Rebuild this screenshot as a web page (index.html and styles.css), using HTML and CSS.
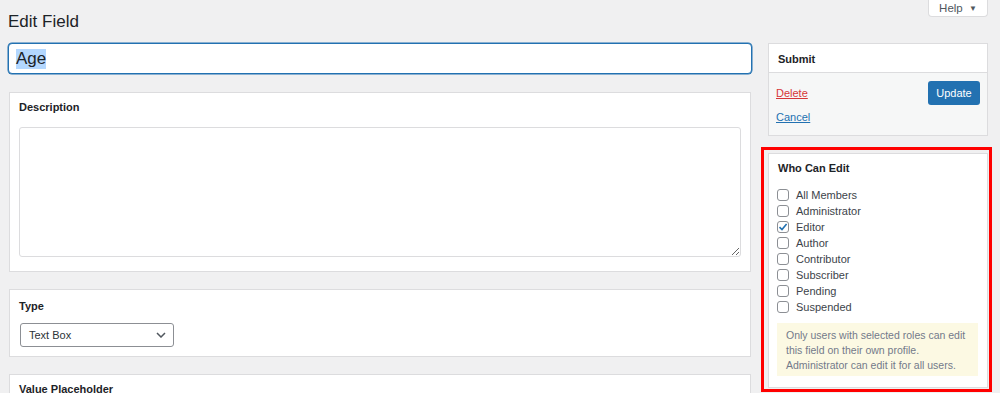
FILE: index.html
```html
<!DOCTYPE html>
<html lang="en">
<head>
    <meta charset="UTF-8">
    <meta name="viewport" content="width=device-width, initial-scale=1.0">
    <title>Edit Field</title>
    <link rel="stylesheet" href="styles.css">
</head>
<body>

    <div class="wrap">
        <div class="page-head">
            <h1 class="page-title">Edit Field</h1>
            <button class="help-tab">Help <span class="caret">&#9660;</span></button>
        </div>

        <div class="columns">
            <!-- main column -->
            <div class="main-col">
                <div class="title-input"><span class="selected">Age</span></div>

                <div class="postbox desc-box">
                    <label class="box-label">Description</label>
                    <textarea class="desc-text"></textarea>
                </div>

                <div class="postbox type-box">
                    <label class="box-label">Type</label>
                    <div class="select">
                        <span>Text Box</span>
                        <svg class="chevron" width="10" height="6" viewBox="0 0 10 6">
                            <polyline points="1,1 5,5 9,1" fill="none" stroke="#50575e" stroke-width="1.5"/>
                        </svg>
                    </div>
                </div>

                <div class="postbox value-box">
                    <label class="box-label">Value Placeholder</label>
                </div>
            </div>

            <!-- sidebar -->
            <div class="side-col">
                <div class="submit-box">
                    <div class="submit-head">Submit</div>
                    <div class="submit-foot">
                        <div class="submit-row">
                            <a href="#" class="link-delete">Delete</a>
                            <button class="btn-update">Update</button>
                        </div>
                        <a href="#" class="link-cancel">Cancel</a>
                    </div>
                </div>

                <div class="highlight-frame">
                    <div class="roles-box">
                        <div class="roles-title">Who Can Edit</div>
                        <ul class="role-list">
                            <li><span class="check"></span>All Members</li>
                            <li><span class="check"></span>Administrator</li>
                            <li>
                                <span class="check">
                                    <svg width="10" height="10" viewBox="0 0 10 10">
                                        <polyline points="1.5,5.2 4,7.6 8.6,2" fill="none" stroke="#2271b1" stroke-width="1.6"/>
                                    </svg>
                                </span>Editor
                            </li>
                            <li><span class="check"></span>Author</li>
                            <li><span class="check"></span>Contributor</li>
                            <li><span class="check"></span>Subscriber</li>
                            <li><span class="check"></span>Pending</li>
                            <li><span class="check"></span>Suspended</li>
                        </ul>
                        <p class="roles-note">Only users with selected roles can edit this field on their own profile. Administrator can edit it for all users.</p>
                    </div>
                </div>
            </div>
        </div>
    </div>

</body>
</html>
```

FILE: styles.css
```css
body {
  margin: 0;
  background: #f0f0f1;
  color: #1d2327;
  font-family: "Liberation Sans", Arial, sans-serif;
  font-size: 11px;
  overflow: hidden;
}

.wrap {
  padding: 0 12px 0 8px;
}

/* header */
.page-head {
  display: flex;
  justify-content: space-between;
  align-items: flex-start;
  height: 43px;
}

.page-title {
  margin: 0;
  padding-top: 10px;
  font-size: 17px;
  line-height: 24px;
  font-weight: 400;
  color: #1d2327;
}

.help-tab {
  width: 60px;
  height: 17px;
  padding: 0 0 1px;
  background: #fff;
  border: 1px solid #dcdcde;
  border-top: none;
  border-radius: 0 0 4px 4px;
  font-family: inherit;
  font-size: 11.5px;
  color: #50575e;
}

.help-tab .caret {
  font-size: 8px;
  margin-left: 3px;
  vertical-align: 1px;
}

.columns {
  display: grid;
  grid-template-columns: 1fr 220px;
  gap: 16px;
  align-items: start;
}

/* main column */
.title-input {
  height: 29px;
  border: 1px solid #2271b1;
  box-shadow: 0 0 0 0.5px #2271b1;
  border-radius: 4px;
  background: #fff;
  padding-left: 7px;
  display: flex;
  align-items: center;
  font-size: 17px;
  color: #1d2327;
}

.title-input .selected {
  background: #b3d7fe;
  line-height: 20px;
}

.postbox {
  margin: 0 1px;
  background: #fff;
  border: 1px solid #dcdcde;
  padding: 0 9px;
}

.box-label {
  display: block;
  font-weight: 700;
  line-height: 16px;
  color: #1d2327;
}

.desc-box {
  margin-top: 18px;
  padding-top: 6px;
  padding-bottom: 14px;
}

.desc-box .box-label {
  margin-bottom: 12px;
}

.desc-text {
  display: block;
  box-sizing: border-box;
  width: 100%;
  height: 130px;
  margin: 0;
  border: 1px solid #dcdcde;
  border-radius: 3px;
  resize: vertical;
}

.type-box {
  margin-top: 17px;
  padding-top: 8px;
  padding-bottom: 9px;
}

.type-box .box-label {
  margin-bottom: 9px;
}

.select {
  box-sizing: border-box;
  width: 154px;
  height: 24px;
  margin-left: 1px;
  padding: 0 7px 0 8px;
  border: 1px solid #8c8f94;
  border-radius: 3px;
  display: flex;
  justify-content: space-between;
  align-items: center;
  color: #2c3338;
}

.value-box {
  margin-top: 17px;
  padding-top: 6px;
  height: 60px;
}

/* sidebar */
.submit-box {
  background: #fff;
  border: 1px solid #dcdcde;
}

.submit-head {
  padding: 7px 9px 5px;
  line-height: 16px;
  font-weight: 700;
  border-bottom: 1px solid #dcdcde;
}

.submit-foot {
  background: #f6f7f7;
  padding: 8px 7px 10px;
}

.submit-row {
  display: flex;
  justify-content: space-between;
  align-items: center;
}

.link-delete {
  color: #d63638;
}

.link-cancel {
  display: block;
  margin-top: 4px;
  line-height: 16px;
  color: #2271b1;
}

.btn-update {
  height: 24px;
  width: 52px;
  padding: 0;
  border: none;
  border-radius: 3px;
  background: #2271b1;
  color: #fff;
  font-family: inherit;
  font-size: 11px;
}

.highlight-frame {
  margin: 11px -4px 0 -7px;
  border: 3px solid #ff0000;
  padding: 3px 1px 1px 4px;
}

.roles-box {
  background: #fff;
  border: 1px solid #dcdcde;
  padding: 6px 9px 11px 8px;
}

.roles-title {
  padding-left: 1px;
  font-weight: 700;
  line-height: 16px;
}

.role-list {
  list-style: none;
  margin: 11px 0 0;
  padding: 0;
}

.role-list li {
  display: flex;
  align-items: center;
  height: 16px;
  color: #3c434a;
}

.check {
  box-sizing: border-box;
  width: 12px;
  height: 12px;
  margin-right: 7px;
  border: 1px solid #8c8f94;
  border-radius: 3px;
  background: #fff;
  display: flex;
  align-items: center;
  justify-content: center;
}

.roles-note {
  margin: 8px 0 0;
  padding: 5px 9px 3px;
  background: #fcf9e3;
  color: #73798a;
  font-size: 10.5px;
  line-height: 15px;
}
```
